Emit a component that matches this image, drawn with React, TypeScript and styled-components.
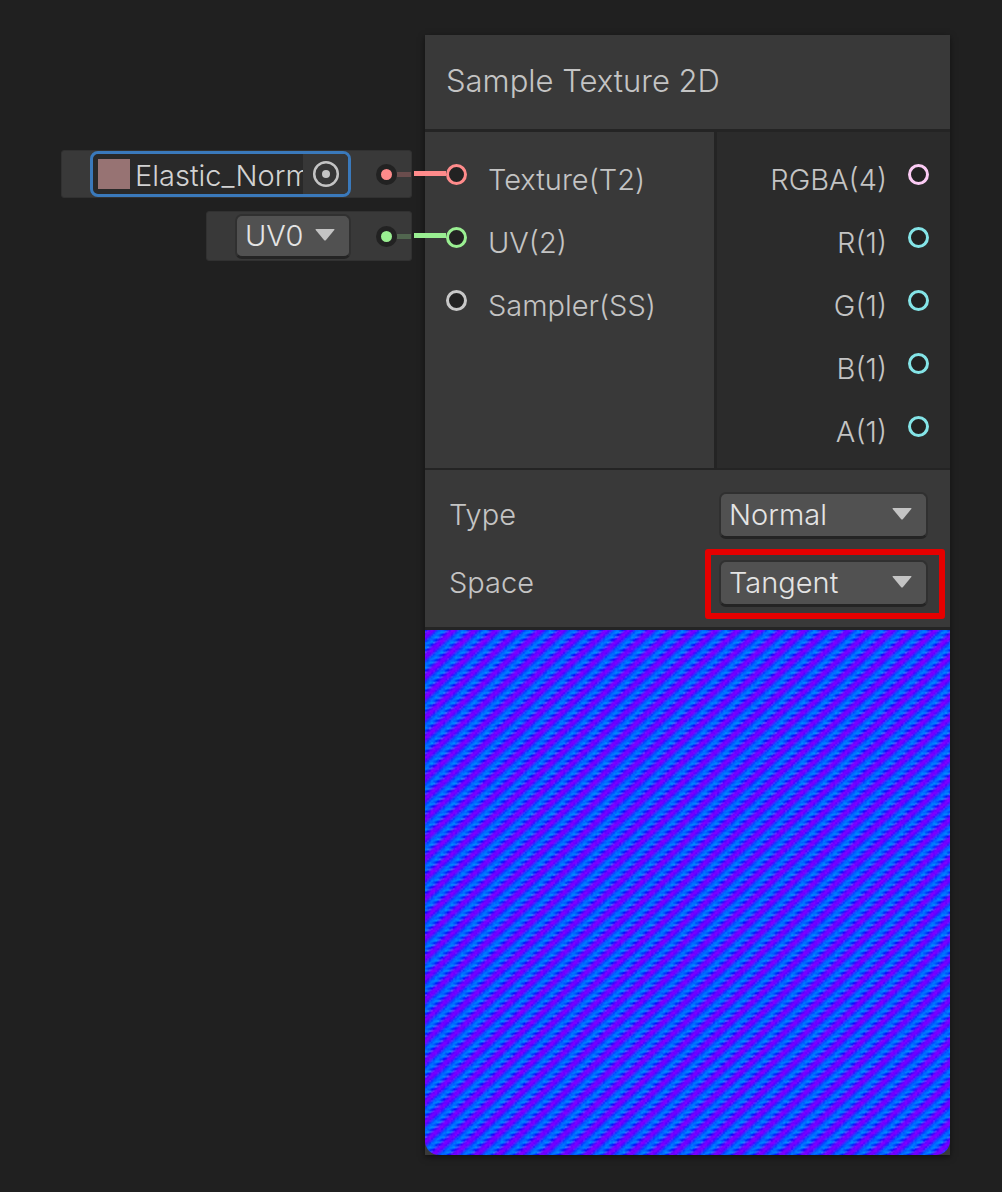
import React, { useEffect, useRef } from "react";
import styled, { createGlobalStyle } from "styled-components";

const colors = {
  canvas: "#202020",
  panel: "#393939",
  panelDark: "#2b2b2b",
  line: "#242424",
  label: "#c4c4c4",
  texture: "#ff8b8b",
  vector2: "#9aef92",
  sampler: "#c8c8c8",
  vector4: "#fbcbf4",
  vector1: "#84e4e7",
};

const GlobalStyle = createGlobalStyle`
  *, *::before, *::after { box-sizing: border-box; }
  body {
    margin: 0;
    background: ${colors.canvas};
    color: ${colors.label};
    font-family: Inter, "Liberation Sans", sans-serif;
    font-size: 29px;
    font-weight: 300;
    line-height: 36px;
  }
`;

const Graph = styled.main`
  display: flex;
  justify-content: flex-end;
  align-items: flex-start;
  gap: 13px;
  min-height: 100vh;
  padding: 35px 52px 36px;
`;

const InputStack = styled.div`
  display: flex;
  flex-direction: column;
  align-items: flex-end;
  gap: 13px;
  padding-top: 115px;
`;

const InputWidget = styled.div<{ $height: number; $color: string }>`
  position: relative;
  display: flex;
  align-items: center;
  height: ${(p) => p.$height}px;
  padding-left: 28px;
  border: 1px solid #313131;
  border-radius: 3px;
  background: ${colors.panel};

  &::after {
    content: "";
    position: absolute;
    z-index: 1;
    top: calc(50% - 3px);
    left: calc(100% + 3px);
    width: 32px;
    height: 5px;
    background: ${(p) => p.$color};
  }
`;

const Plug = styled.span<{ $color: string }>`
  flex: none;
  width: 21px;
  height: 21px;
  margin-left: 25px;
  border: 5px solid #222;
  border-radius: 50%;
  background: ${(p) => p.$color};
`;

const Lead = styled.span<{ $color: string }>`
  width: 14px;
  height: 5px;
  background: ${(p) => p.$color};
  opacity: 0.25;
`;

const ObjectField = styled.div`
  display: flex;
  align-items: center;
  width: 261px;
  height: 46px;
  padding-left: 5px;
  overflow: hidden;
  border: 3px solid #3a79bb;
  border-radius: 8px;
  background: #292929;
`;

const Swatch = styled.span`
  flex: none;
  width: 32px;
  height: 30px;
  background: #977373;
`;

const ObjectName = styled.input`
  flex: 1;
  min-width: 0;
  height: 40px;
  padding: 2px 0 0;
  margin-left: 5px;
  border: 0;
  outline: 0;
  background: transparent;
  color: #d2d2d2;
  font: inherit;
`;

const PickerButton = styled.button`
  display: grid;
  place-items: center;
  width: 45px;
  height: 40px;
  padding: 0;
  border: 0;
  background: #373737;
  color: #c4c4c4;
`;

const SelectWrap = styled.span<{ $width: number }>`
  position: relative;
  flex: none;
  display: block;
  width: ${(p) => p.$width}px;
`;

const SelectBox = styled.select<{ $height: number }>`
  display: block;
  width: 100%;
  height: ${(p) => p.$height}px;
  padding: 0 8px;
  appearance: none;
  border: 2px solid #303030;
  border-bottom: 3px solid #242424;
  border-radius: 7px;
  background: #515151;
  color: #e4e4e4;
  font: inherit;
`;

const Arrow = styled.svg`
  position: absolute;
  top: calc(50% - 7px);
  right: 16px;
  width: 20px;
  height: 12px;
  fill: #c4c4c4;
  pointer-events: none;
`;

const Highlight = styled.span`
  position: absolute;
  inset: -11px -17px -12px -14px;
  border: 6px solid #e60000;
  border-radius: 3px;
  pointer-events: none;
`;

const Node = styled.article`
  flex: 0 1 525px;
  min-width: 0;
  background: ${colors.panel};
  box-shadow: 0 2px 6px rgba(0, 0, 0, 0.5);
`;

const Header = styled.header`
  padding: 28px 21px 30px;
  border-bottom: 3px solid ${colors.line};
`;

const Title = styled.h1`
  margin: 0;
  font-size: 31px;
  font-weight: 300;
  line-height: 36px;
`;

const Ports = styled.div`
  display: grid;
  grid-template-columns: minmax(0, 1fr) 236px;
  border-bottom: 2px solid ${colors.line};
`;

const PortList = styled.ul<{ $output?: boolean }>`
  margin: 0;
  padding: 11px 21px 10px;
  list-style: none;
  border-left: ${(p) => (p.$output ? `3px solid ${colors.line}` : "0")};
  background: ${(p) => (p.$output ? colors.panelDark : colors.panel)};
`;

const PortRow = styled.li<{ $output?: boolean }>`
  display: flex;
  flex-direction: ${(p) => (p.$output ? "row-reverse" : "row")};
  align-items: center;
  gap: 21px;
  height: 63px;
`;

const Ring = styled.span<{ $color: string }>`
  flex: none;
  width: 21px;
  height: 21px;
  border: 3px solid ${(p) => p.$color};
  border-radius: 50%;
  background: #222;
`;

const PortName = styled.span`
  padding-top: 10px;
`;

const Controls = styled.div`
  padding: 11px 22px 10px 24px;
  border-bottom: 3px solid ${colors.line};
`;

const ControlRow = styled.div`
  display: flex;
  align-items: center;
  justify-content: space-between;
  height: 68px;
`;

const Preview = styled.canvas`
  display: block;
  width: 100%;
  aspect-ratio: 1;
  border-radius: 0 0 14px 14px;
`;

const PREVIEW_SIZE = 525;

/** Twill weave normals: diagonal ridges crossed by short horizontal threads. */
function drawWeave(canvas: HTMLCanvasElement) {
  const ctx = canvas.getContext("2d");
  if (!ctx) return;
  const image = ctx.createImageData(PREVIEW_SIZE, PREVIEW_SIZE);
  const turn = Math.PI * 2;
  const clamp = (v: number) => Math.max(0, Math.min(255, v));
  for (let y = 0; y < PREVIEW_SIZE; y++) {
    for (let x = 0; x < PREVIEW_SIZE; x++) {
      const wobble = 0.03 * Math.sin((x + y) / 41) + 0.03 * Math.sin(x / 83 - y / 61);
      const ridge = (x - 17) / 21.875 + y / 20.2 + wobble;
      const wave = Math.cos(turn * ridge);
      const weft = Math.cos(turn * (y / 5.05 - 0.35));
      const cell = Math.sin((x >> 1) * 12.9898 + (y >> 1) * 78.233) * 43758.5453;
      const grain = (cell - Math.floor(cell) - 0.5) * 20;
      const edge = Math.max(0, Math.cos(turn * (ridge - 0.2)));
      const i = (y * PREVIEW_SIZE + x) * 4;
      image.data[i] = clamp(42 - wave * 76 + edge * weft * 20 + grain);
      image.data[i + 1] = clamp(50 + wave * 62 + edge * weft * 34 + grain);
      image.data[i + 2] = 255;
      image.data[i + 3] = 255;
    }
  }
  ctx.putImageData(image, 0, 0);
}

function TexturePreview() {
  const ref = useRef<HTMLCanvasElement>(null);
  useEffect(() => {
    if (ref.current) drawWeave(ref.current);
  }, []);
  return <Preview ref={ref} width={PREVIEW_SIZE} height={PREVIEW_SIZE} role="img" />;
}

type DropdownProps = {
  id: string;
  value: string;
  width: number;
  height: number;
  highlighted?: boolean;
  label?: string;
};

function Dropdown({ id, value, width, height, highlighted, label }: DropdownProps) {
  return (
    <SelectWrap $width={width}>
      <SelectBox id={id} $height={height} defaultValue={value} aria-label={label}>
        <option>{value}</option>
      </SelectBox>
      <Arrow viewBox="0 0 20 12" aria-hidden="true">
        <path d="M1.2 0h17.6q1.3 0 .5 1L11 11q-1 1-2 0L.7 1Q-.1 0 1.2 0z" />
      </Arrow>
      {highlighted && <Highlight />}
    </SelectWrap>
  );
}

const inputs = [
  { name: "Texture(T2)", color: colors.texture },
  { name: "UV(2)", color: colors.vector2 },
  { name: "Sampler(SS)", color: colors.sampler },
];

const outputs = [
  { name: "RGBA(4)", color: colors.vector4 },
  { name: "R(1)", color: colors.vector1 },
  { name: "G(1)", color: colors.vector1 },
  { name: "B(1)", color: colors.vector1 },
  { name: "A(1)", color: colors.vector1 },
];

export default function App() {
  return (
    <>
      <GlobalStyle />
      <Graph>
        <InputStack>
          <InputWidget $height={48} $color={colors.texture}>
            <ObjectField>
              <Swatch />
              <ObjectName aria-label="Texture" defaultValue="Elastic_Normal" />
              <PickerButton type="button" aria-label="Select texture">
                <svg width="28" height="28" viewBox="0 0 28 28" aria-hidden="true">
                  <circle cx="14" cy="14" r="11.8" fill="none" stroke="currentColor" strokeWidth="2.5" />
                  <circle cx="14" cy="14" r="4" fill="currentColor" />
                </svg>
              </PickerButton>
            </ObjectField>
            <Plug $color={colors.texture} />
            <Lead $color={colors.texture} />
          </InputWidget>
          <InputWidget $height={50} $color={colors.vector2}>
            <Dropdown id="uv" value="UV0" width={116} height={45} label="UV channel" />
            <Plug $color={colors.vector2} />
            <Lead $color={colors.vector2} />
          </InputWidget>
        </InputStack>

        <Node>
          <Header>
            <Title>Sample Texture 2D</Title>
          </Header>
          <Ports>
            <PortList>
              {inputs.map((port) => (
                <PortRow key={port.name}>
                  <Ring $color={port.color} />
                  <PortName>{port.name}</PortName>
                </PortRow>
              ))}
            </PortList>
            <PortList $output>
              {outputs.map((port) => (
                <PortRow key={port.name} $output>
                  <Ring $color={port.color} />
                  <PortName>{port.name}</PortName>
                </PortRow>
              ))}
            </PortList>
          </Ports>
          <Controls>
            <ControlRow>
              <label htmlFor="type">Type</label>
              <Dropdown id="type" value="Normal" width={209} height={47} />
            </ControlRow>
            <ControlRow>
              <label htmlFor="space">Space</label>
              <Dropdown id="space" value="Tangent" width={209} height={47} highlighted />
            </ControlRow>
          </Controls>
          <TexturePreview />
        </Node>
      </Graph>
    </>
  );
}
